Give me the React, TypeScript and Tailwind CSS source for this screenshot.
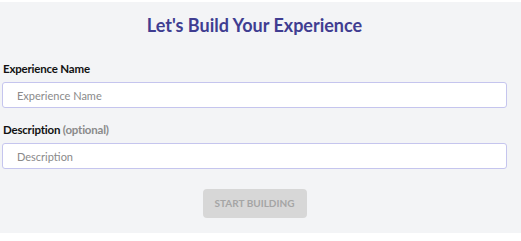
export default function App() {
    return (
        <div className="h-[241px] w-[521px] bg-white pt-[2px] font-['Lato',sans-serif]">
            <div className="flex h-[231px] flex-col bg-[#f3f4f6] px-[2px]">
                <h1 className="mt-[11px] pr-[12px] text-center text-[18px] leading-[24px] font-bold text-[#3f3d91]">
                    Let's Build Your Experience
                </h1>

                <label className="mt-[24px] ml-px text-[11.5px] leading-[16px] font-bold tracking-[-0.2px] text-[#111]">
                    Experience Name
                </label>
                <input
                    type="text"
                    placeholder="Experience Name"
                    className="mt-[5px] h-[26px] w-[505px] rounded-[3px] border border-[#c5c5ee] bg-white px-[14px] text-[11px] text-[#333] outline-none placeholder:text-[#8a8a8a]"
                />

                <label className="mt-[14px] ml-px text-[11.5px] leading-[16px] font-bold tracking-[-0.2px] text-[#111]">
                    Description{' '}
                    <span className="text-[#8a8a8a]">(optional)</span>
                </label>
                <input
                    type="text"
                    placeholder="Description"
                    className="mt-[5px] h-[26px] w-[505px] rounded-[3px] border border-[#c5c5ee] bg-white px-[14px] text-[11px] text-[#333] outline-none placeholder:text-[#8a8a8a]"
                />

                <div className="mt-[20px] flex justify-center pr-[12px]">
                    <button
                        disabled
                        className="h-[29px] w-[104px] rounded-[4px] bg-[#d7d7d7] text-[10px] font-bold text-[#a5a5a5]"
                    >
                        START BUILDING
                    </button>
                </div>
            </div>
        </div>
    );
}
